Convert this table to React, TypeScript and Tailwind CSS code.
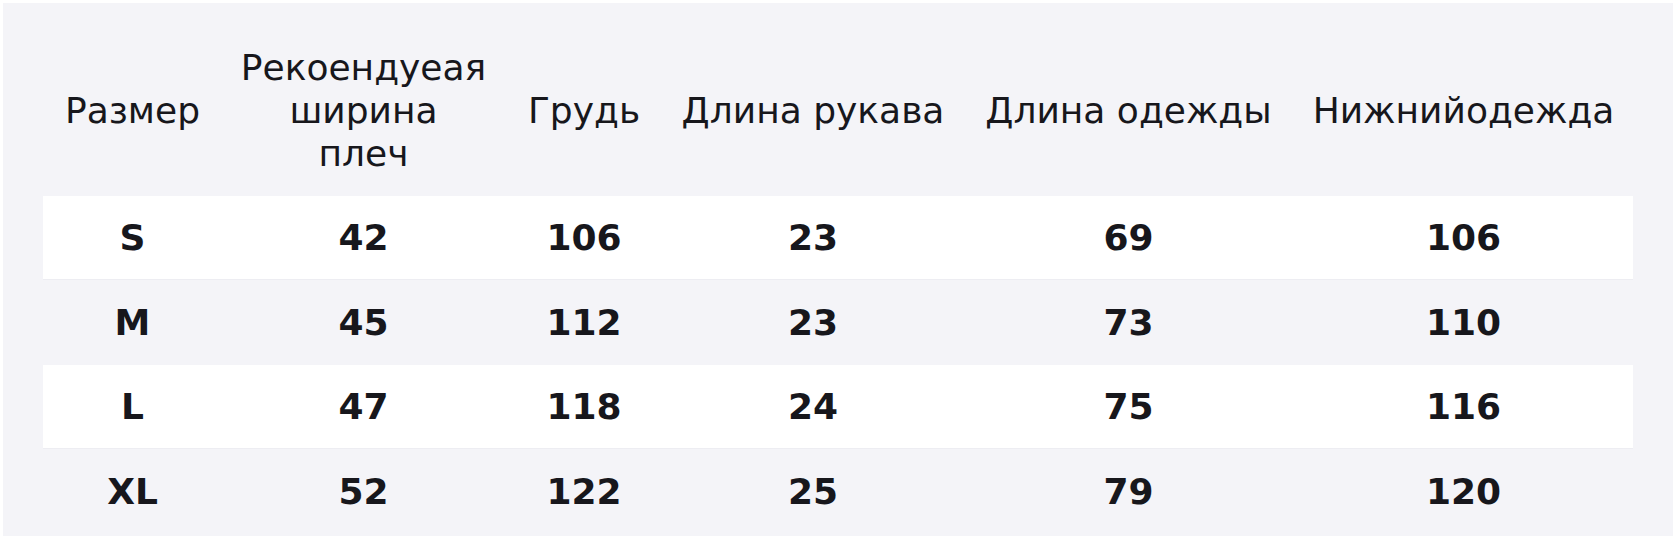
const headers: string[][] = [
    ['Размер'],
    ['Рекоендуеая', 'ширина', 'плеч'],
    ['Грудь'],
    ['Длина рукава'],
    ['Длина одежды'],
    ['Нижнийодежда'],
];

const widths = ['w-[179px]', 'w-[283px]', 'w-[158px]', 'w-[300px]', 'w-[331px]', 'w-[339px]'];

const rows = [
    ['S', '42', '106', '23', '69', '106'],
    ['M', '45', '112', '23', '73', '110'],
    ['L', '47', '118', '24', '75', '116'],
    ['XL', '52', '122', '25', '79', '120'],
];

export default function App() {
    return (
        <div className="bg-white w-[1676px] h-[536px] pt-[3px] pl-[3px] pr-[3px] overflow-hidden" style={{ fontFamily: '"DejaVu Sans", sans-serif' }}>
            <div className="bg-[#f4f4f8] h-[533px] px-[40px] text-[#17171c]">
                <table className="border-collapse table-fixed w-[1590px]">
                    <thead>
                        <tr>
                            {headers.map((lines, i) => (
                                <th
                                    key={i}
                                    className={`${widths[i]} h-[193px] pt-[21px] p-0 text-center align-middle font-normal text-[36px] leading-[43px] whitespace-nowrap`}
                                >
                                    {lines.map((l, li) => (
                                        <div key={li}>{l}</div>
                                    ))}
                                </th>
                            ))}
                        </tr>
                    </thead>
                    <tbody>
                        {rows.map((row, idx) => {
                            const isWhite = idx % 2 === 0;
                            return (
                                <tr
                                    key={idx}
                                    className={isWhite ? 'bg-white h-[83px] border-b border-b-[#ededf2]' : 'h-[86px]'}
                                >
                                    {row.map((cell, ci) => (
                                        <td key={ci} className="text-center align-middle font-bold text-[36px] leading-[43px] p-0">
                                            {cell}
                                        </td>
                                    ))}
                                </tr>
                            )
                        })}
                    </tbody>
                </table>
            </div>
        </div>
    )
}
